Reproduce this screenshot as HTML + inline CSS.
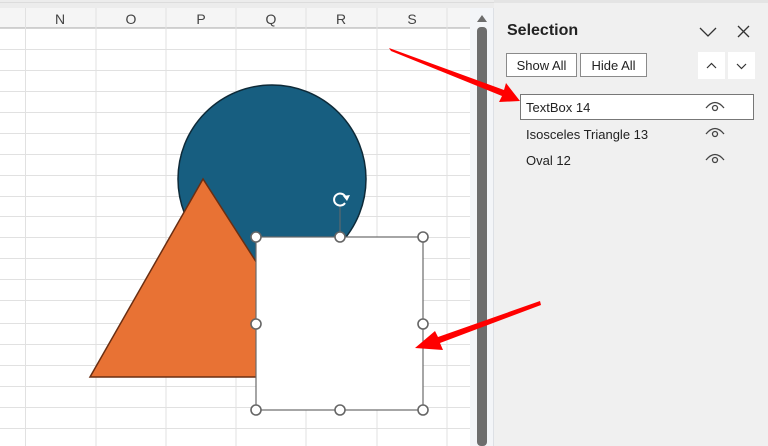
<!DOCTYPE html>
<html><head><meta charset="utf-8"><style>
body{margin:0;width:768px;height:446px;overflow:hidden;background:#fff;font-family:"Liberation Sans",sans-serif;position:relative}
.abs{position:absolute}
.btn{position:absolute;top:53px;height:24px;border:1px solid #8a8a8a;background:#fff;font-size:13px;color:#222;line-height:24px;text-align:center;box-sizing:border-box}
.item{position:absolute;left:526px;font-size:13px;color:#222}
</style></head><body>
<svg class="abs" style="left:0;top:0" width="494" height="446">
<rect x="0" y="0" width="494" height="446" fill="#fff"/>
<rect x="0" y="0" width="494" height="8" fill="#ececec"/>
<line x1="0" y1="2.5" x2="494" y2="2.5" stroke="#dcdcdc"/>
<rect x="0" y="8" width="470" height="20" fill="#f5f5f5"/>
<line x1="0" y1="28" x2="470" y2="28" stroke="#a8a8a8"/>
<g stroke="#e1e1e1" stroke-width="1">
<line x1="25.5" y1="8" x2="25.5" y2="446"/><line x1="96" y1="8" x2="96" y2="446"/><line x1="166" y1="8" x2="166" y2="446"/><line x1="236" y1="8" x2="236" y2="446"/><line x1="306" y1="8" x2="306" y2="446"/><line x1="377" y1="8" x2="377" y2="446"/><line x1="447" y1="8" x2="447" y2="446"/>
<line x1="0" y1="49.5" x2="470" y2="49.5"/><line x1="0" y1="70.5" x2="470" y2="70.5"/><line x1="0" y1="91.5" x2="470" y2="91.5"/><line x1="0" y1="112.5" x2="470" y2="112.5"/><line x1="0" y1="133.5" x2="470" y2="133.5"/><line x1="0" y1="154.5" x2="470" y2="154.5"/><line x1="0" y1="175.5" x2="470" y2="175.5"/><line x1="0" y1="196.5" x2="470" y2="196.5"/><line x1="0" y1="216.5" x2="470" y2="216.5"/><line x1="0" y1="237.5" x2="470" y2="237.5"/><line x1="0" y1="258.5" x2="470" y2="258.5"/><line x1="0" y1="279.5" x2="470" y2="279.5"/><line x1="0" y1="300.5" x2="470" y2="300.5"/><line x1="0" y1="323.5" x2="470" y2="323.5"/><line x1="0" y1="344.5" x2="470" y2="344.5"/><line x1="0" y1="365.5" x2="470" y2="365.5"/><line x1="0" y1="386.5" x2="470" y2="386.5"/><line x1="0" y1="407.5" x2="470" y2="407.5"/><line x1="0" y1="428.5" x2="470" y2="428.5"/>
</g>
<g font-size="14" fill="#444" text-anchor="middle">
<text x="60" y="24">N</text><text x="131" y="24">O</text><text x="201" y="24">P</text><text x="271" y="24">Q</text><text x="341" y="24">R</text><text x="412" y="24">S</text>
</g>
<rect x="470" y="8" width="24" height="438" fill="#f3f5f8"/>
<line x1="493.5" y1="8" x2="493.5" y2="446" stroke="#dde0e5"/>
<rect x="477" y="27" width="10" height="419" rx="4" fill="#6d6d6d"/>
<polygon points="477,22 482,15 487,22" fill="#6d6d6d"/>
<circle cx="272" cy="179" r="94" fill="#175e80" stroke="#0e2a38" stroke-width="1.5"/>
<polygon points="203,179 90,377 330,377" fill="#e87234" stroke="#6a2e12" stroke-width="1.5"/>
<rect x="256" y="237" width="167" height="173" fill="#fff" stroke="#6a6a6a" stroke-width="1.2"/>
<line x1="340" y1="207" x2="340" y2="237" stroke="#6a6a6a"/>
<g fill="#fff" stroke="#666" stroke-width="1.6">
<circle cx="256" cy="237" r="5"/><circle cx="340" cy="237" r="5"/><circle cx="423" cy="237" r="5"/>
<circle cx="256" cy="324" r="5"/><circle cx="423" cy="324" r="5"/>
<circle cx="256" cy="410" r="5"/><circle cx="340" cy="410" r="5"/><circle cx="423" cy="410" r="5"/>
</g>
<path d="M345,203 A6,6 0 1 1 345.5,197" fill="none" stroke="#fff" stroke-width="2"/>
<polygon points="343,196 350,195 347,201" fill="#fff"/>
</svg>
<div class="abs" style="left:494px;top:0;width:274px;height:446px;background:#f0f0f0"></div>
<div class="abs" style="left:494px;top:0;width:274px;height:3px;background:#e4e4e4"></div>
<div class="abs" style="left:507px;top:22px;font-size:16px;font-weight:bold;color:#222">Selection</div>
<svg class="abs" style="left:690px;top:15px" width="78" height="70">
<path d="M10,13 L18,21 L26,13" fill="none" stroke="#333" stroke-width="1.3"/>
<path d="M48,11 L59,22 M59,11 L48,22" stroke="#333" stroke-width="1.3"/>
<rect x="8" y="37" width="27" height="27" fill="#fff"/><rect x="38" y="37" width="27" height="27" fill="#fff"/>
<path d="M17,53 L21.5,48.5 L26,53" fill="none" stroke="#333" stroke-width="1.2"/>
<path d="M47,49 L51.5,53.5 L56,49" fill="none" stroke="#333" stroke-width="1.2"/>
</svg>
<div class="btn" style="left:506px;width:71px">Show All</div>
<div class="btn" style="left:580px;width:67px">Hide All</div>
<div class="abs" style="left:520px;top:94px;width:234px;height:26px;background:#fff;border:1px solid #777;box-sizing:border-box"></div>
<div class="item" style="top:100px">TextBox 14</div>
<div class="item" style="top:127px">Isosceles Triangle 13</div>
<div class="item" style="top:153px">Oval 12</div>
<svg class="abs" style="left:704px;top:98px" width="22" height="70">
<g fill="none" stroke="#444" stroke-width="1.3">
<path d="M2,10 Q11,-1 20,10"/><circle cx="11" cy="10" r="2.5"/>
<path d="M2,36 Q11,25 20,36"/><circle cx="11" cy="36" r="2.5"/>
<path d="M2,62 Q11,51 20,62"/><circle cx="11" cy="62" r="2.5"/>
</g></svg>
<svg class="abs" style="left:0;top:0" width="768" height="446">
<polygon points="389,48 391,51 502,96 499,102 520,101 506,83 504,90" fill="#f00"/>
<polygon points="540,301 541,305 440,343 443,350 415,348 435,331 438,337" fill="#f00"/>
</svg>
</body></html>
